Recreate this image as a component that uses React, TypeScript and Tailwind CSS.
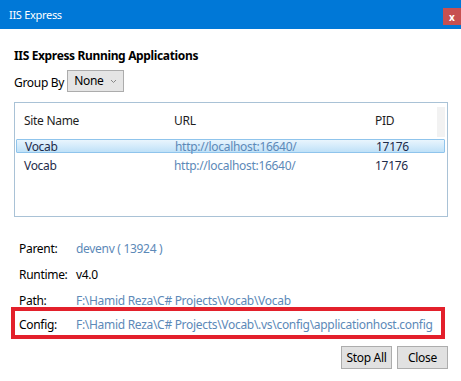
import React from "react";

const font = { fontFamily: '"Noto Sans", "Open Sans", Arial, sans-serif' };

export default function App() {
  return (
    <div className="w-[461px] h-[381px] bg-white flex flex-col text-[12px] tracking-[-0.3px] text-[#1b1b1b] overflow-hidden whitespace-nowrap" style={font}>
      <div className="h-[29px] bg-[#0078d7] flex justify-between">
        <div className="pl-[9px] pt-[7px] text-white text-[11px] leading-[16px]" style={font}>IIS Express</div>
        <div className="mt-[8px] w-[18px] h-[17px] bg-[#c75050] flex items-center justify-center text-white text-[10px] font-bold leading-none tracking-normal">x</div>
      </div>
      <div className="pl-[14px] pr-[13px] flex flex-col">
        <div className="mt-[18px] h-[18px] font-bold text-[12px] leading-[18px] text-black tracking-[-0.35px]">IIS Express Running Applications</div>
        <div className="mt-[5px] flex items-center h-[22px]">
          <span className="text-black mt-[3px]">Group By</span>
          <div className="ml-[3px] w-[57px] h-[22px] bg-[#e5e5e5] border border-[#acacac] flex items-center pl-[6px] pr-[5px] justify-between">
            <span className="text-black">None</span>
            <svg width="7" height="5" viewBox="0 0 7 5" className="mr-[1px]">
              <path d="M1 1 L3.5 3.5 L6 1" stroke="#888" strokeWidth="1" fill="none" />
            </svg>
          </div>
        </div>
        <div className="mt-[10px] h-[115px] border border-[#a9c2d6] relative">
          <div className="h-[36px] flex items-center text-[#1e1e1e] pl-[9px] relative">
            <span className="w-[150px]">Site Name</span>
            <span className="w-[201px]">URL</span>
            <span>PID</span>
            <div className="absolute right-[2px] top-[4px] w-[8px] h-[30px] bg-[#f2f2f2]"></div>
          </div>
          <div className="ml-[1px] mr-[2px] h-[14px] flex items-center pl-[8px] pt-[1px] rounded-[1px] border border-[#8fc4ec] bg-gradient-to-b from-[#e9f5fd] to-[#bfe1f8] text-[#1e2b4a]">
            <span className="w-[150px]">Vocab</span>
            <span className="w-[201px] text-[#5c89b8]">http://localhost:16640/</span>
            <span>17176</span>
          </div>
          <div className="h-[26px] flex items-center pl-[9px] text-[#1e2b4a]">
            <span className="w-[150px]">Vocab</span>
            <span className="w-[201px] text-[#5c89b8]">http://localhost:16640/</span>
            <span>17176</span>
          </div>
        </div>
        <div className="mt-[19px] flex flex-col pl-[5px]">
          <div className="h-[26px] flex items-center">
            <span className="w-[57px] text-black">Parent:</span>
            <span className="text-[#5c89b8]">devenv ( 13924 )</span>
          </div>
          <div className="h-[26px] flex items-center">
            <span className="w-[57px] text-black">Runtime:</span>
            <span className="text-black">v4.0</span>
          </div>
          <div className="h-[19px] flex items-start pt-[4px] leading-[17px]">
            <span className="w-[57px] text-black">Path:</span>
            <span className="text-[#5c89b8]">F:\Hamid Reza\C# Projects\Vocab\Vocab</span>
          </div>
        </div>
        <div className="-ml-[3px] mr-[3px] h-[32px] border-[4px] border-[#e3202b] flex items-center pl-[4px] pt-[3px]">
          <span className="w-[57px] text-black">Config:</span>
          <span className="text-[#5c89b8]">F:\Hamid Reza\C# Projects\Vocab\.vs\config\applicationhost.config</span>
        </div>
        <div className="mt-[7px] flex justify-end gap-[5px]">
          <div className="w-[51px] h-[23px] bg-[#e1e1e1] border border-[#adadad] flex items-center justify-center text-black">Stop All</div>
          <div className="w-[51px] h-[23px] bg-[#e1e1e1] border border-[#adadad] flex items-center justify-center text-black">Close</div>
        </div>
      </div>
    </div>
  );
}
